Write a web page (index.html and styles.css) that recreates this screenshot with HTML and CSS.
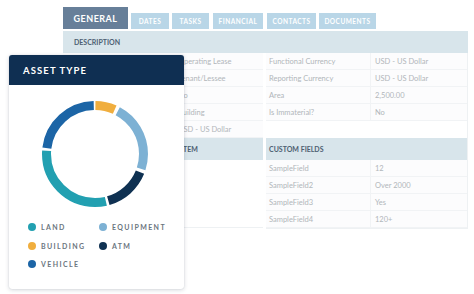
FILE: index.html
```html
<!DOCTYPE html>
<html>
<head>
<meta charset="utf-8">
<link rel="stylesheet" href="styles.css">
</head>
<body>
<div class="page">
  <div class="panel">
    <div class="tabs">
      <div class="tab active">GENERAL</div>
      <div class="tab t-dates">DATES</div>
      <div class="tab t-tasks">TASKS</div>
      <div class="tab t-fin">FINANCIAL</div>
      <div class="tab t-con">CONTACTS</div>
      <div class="tab t-doc">DOCUMENTS</div>
    </div>
    <div class="head">DESCRIPTION</div>
    <div class="cols">
      <div class="col left">
        <div class="row"><span class="lbl"></span><span class="val">Operating Lease</span></div>
        <div class="row"><span class="lbl"></span><span class="val">Tenant/Lessee</span></div>
        <div class="row"><span class="lbl"></span><span class="val">No</span></div>
        <div class="row"><span class="lbl"></span><span class="val">Building</span></div>
        <div class="row"><span class="lbl"></span><span class="val">USD - US Dollar</span></div>
      </div>
      <div class="col right">
        <div class="row"><span class="lbl">Functional Currency</span><span class="val">USD - US Dollar</span></div>
        <div class="row"><span class="lbl">Reporting Currency</span><span class="val">USD - US Dollar</span></div>
        <div class="row"><span class="lbl">Area</span><span class="val">2,500.00</span></div>
        <div class="row"><span class="lbl">Is Immaterial?</span><span class="val">No</span></div>
        <div class="row blank"></div>
      </div>
    </div>
    <div class="cols second">
      <div class="col left">
        <div class="head split"><span class="hl"></span><span class="hv">ITEM</span></div>
        <div class="empty"></div>
      </div>
      <div class="col right">
        <div class="head">CUSTOM FIELDS</div>
        <div class="row"><span class="lbl">SampleField</span><span class="val">12</span></div>
        <div class="row"><span class="lbl">SampleField2</span><span class="val">Over 2000</span></div>
        <div class="row"><span class="lbl">SampleField3</span><span class="val">Yes</span></div>
        <div class="row"><span class="lbl">SampleField4</span><span class="val">120+</span></div>
      </div>
    </div>
  </div>

  <div class="card">
    <div class="card-head">ASSET TYPE</div>
    <div class="card-body">
      <svg class="donut" width="108" height="108" viewBox="0 0 108 108">
        <g transform="rotate(-90 54 54)" fill="none" stroke-width="9">
          <circle cx="54" cy="54" r="48.5" pathLength="360" stroke="#f0ae3e" stroke-dasharray="23.5 400" stroke-dashoffset="-0.5"/>
          <circle cx="54" cy="54" r="48.5" pathLength="360" stroke="#7db1d4" stroke-dasharray="80 400" stroke-dashoffset="-28"/>
          <circle cx="54" cy="54" r="48.5" pathLength="360" stroke="#0f3152" stroke-dasharray="52 400" stroke-dashoffset="-112"/>
          <circle cx="54" cy="54" r="48.5" pathLength="360" stroke="#22a0b1" stroke-dasharray="107 400" stroke-dashoffset="-167"/>
          <circle cx="54" cy="54" r="48.5" pathLength="360" stroke="#1c65a6" stroke-dasharray="81.5 400" stroke-dashoffset="-277"/>
        </g>
      </svg>
      <div class="legend">
        <div class="item"><span class="dot land"></span>LAND</div>
        <div class="item"><span class="dot equip"></span>EQUIPMENT</div>
        <div class="item"><span class="dot build"></span>BUILDING</div>
        <div class="item"><span class="dot atm"></span>ATM</div>
        <div class="item"><span class="dot veh"></span>VEHICLE</div>
      </div>
    </div>
  </div>
</div>
</body>
</html>
```

FILE: styles.css
```css
* { box-sizing: border-box; }
html, body { margin: 0; padding: 0; background: #ffffff; }
body { font-family: Lato, "Open Sans", sans-serif; }

.page { position: relative; width: 474px; height: 294px; overflow: hidden; }

.panel { margin-left: 63px; padding-top: 7px; width: 405px; }

.tabs { display: flex; align-items: flex-end; height: 22px; }
.tab {
  height: 16px; margin-left: 3px;
  background: #b9d6e7; color: #ffffff;
  font-size: 6.5px; font-weight: 700; letter-spacing: 0.5px;
  display: flex; align-items: center; justify-content: center;
}
.tab.active {
  height: 22px; width: 65px; margin-left: 0;
  background: #677f99; font-size: 9px; letter-spacing: 0.5px;
}
.t-dates { width: 38px; }
.t-tasks { width: 37px; }
.t-fin { width: 50px; margin-left: 4px; }
.t-con { width: 49px; margin-left: 4px; }
.t-doc { width: 57px; }

.head {
  margin-top: 2px; height: 22px;
  background: #d8e5eb; color: #4d6072;
  font-size: 7px; font-weight: 700;
  display: flex; align-items: center; padding-left: 11px;
}

.cols { display: grid; grid-template-columns: 200px 202px; column-gap: 3px; }
.col.right { border-right: 1px solid #eef1f3; }

.row { display: flex; height: 17px; font-size: 7.5px; color: #b1b6ba; }
.row .lbl, .row .val {
  display: flex; align-items: center;
  border-bottom: 1px solid #f1f3f5;
  background: #fcfcfd;
}
.left .row .lbl { width: 111px; padding-left: 9px; }
.left .row .val { flex: 1; padding-left: 4px; }
.right .row .lbl { width: 105px; padding-left: 3px; border-right: 1px solid #f1f3f5; }
.right .row .val { flex: 1; padding-left: 4px; }
.row.blank { background: #ffffff; }

.second .head { margin-top: 0; }
.second .right .head { padding-left: 3px; }
.head.split { padding-left: 0; }
.head.split .hl { width: 118px; }
.empty { height: 68px; border-bottom: 1px solid #eef1f3; }
.second .right { border-bottom: 1px solid #eef1f3; }

.card {
  position: absolute; left: 9px; top: 55px;
  width: 175px; height: 234px;
  background: #ffffff; border-radius: 3px;
  box-shadow: 0 1px 4px rgba(20, 40, 60, 0.18), 0 0 1px rgba(20, 40, 60, 0.2);
  overflow: hidden;
}
.card-head {
  height: 30px; background: #0f2f52; color: #ffffff;
  font-size: 9.5px; font-weight: 700; letter-spacing: 1.1px;
  display: flex; align-items: center; padding-left: 14px;
}
.card-body { padding-top: 15px; }
.donut { display: block; margin-left: 32px; }

.legend {
  display: grid; grid-template-columns: 71px auto;
  padding-left: 19px; margin-top: 10px;
}
.item {
  display: flex; align-items: center; height: 18.5px;
  font-size: 7px; font-weight: 700; letter-spacing: 1.4px; color: #6b7680;
}
.dot { width: 8px; height: 8px; border-radius: 50%; margin-right: 5px; flex: none; }
.land { background: #22a0b1; }
.equip { background: #7db1d4; }
.build { background: #f0ae3e; }
.atm { background: #0f3152; }
.veh { background: #1c65a6; }
```
